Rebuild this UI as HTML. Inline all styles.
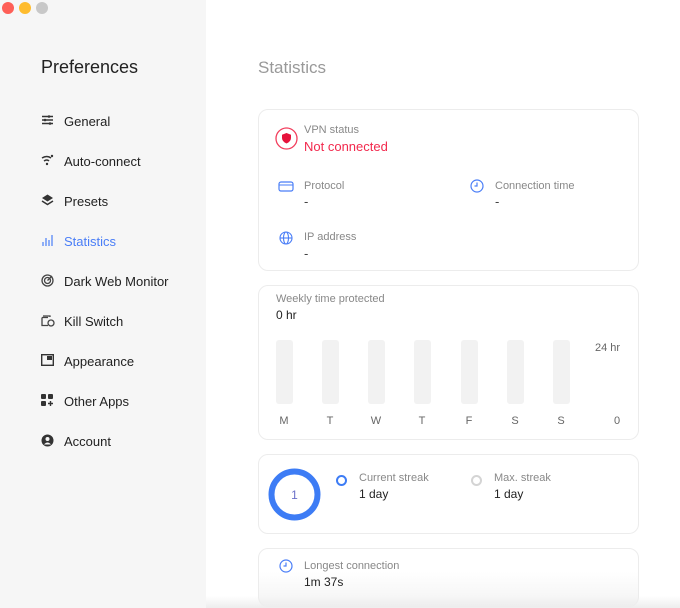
<!DOCTYPE html>
<html style="width:680px;height:608px;overflow:hidden"><head><style>
*{margin:0;padding:0;box-sizing:border-box}
body{width:680px;height:608px;overflow:hidden;font-family:"Liberation Sans",sans-serif;background:#fff;position:relative;color:#222}
.side{position:absolute;left:0;top:0;width:206px;height:608px;background:#f6f6f6}
.tl{position:absolute;top:2px;width:12px;height:12px;border-radius:50%}
.t{position:absolute;font-size:13px;white-space:nowrap}
.nav{position:absolute;left:64px;font-size:13px;color:#222}
.ic{position:absolute;left:41px}
.card{position:absolute;left:258px;width:381px;border:1px solid #ececec;border-radius:10px;background:#fff}
.g{color:#888;font-size:11px}
.bar{position:absolute;top:340px;width:17px;height:64px;background:#f2f2f2;border-radius:3px}
.lab{position:absolute;top:415px;font-size:11px;color:#666;width:20px;text-align:center}
</style></head><body>
<div class="side"></div>
<div class="tl" style="left:2px;background:#fe5f57"></div>
<div class="tl" style="left:19px;background:#febc2e"></div>
<div class="tl" style="left:36px;background:#c8c8c8"></div>
<div class="t" style="left:41px;top:57px;font-size:18px;color:#222">Preferences</div>

<svg class="ic" style="top:114px" width="13" height="12" viewBox="0 0 13 12"><g stroke="#333" stroke-width="1.4"><path d="M1 2.5h11M1 6h11M1 9.5h11"/></g><circle cx="8" cy="2.5" r="1.3" fill="#333"/><circle cx="4" cy="6" r="1.3" fill="#333"/><circle cx="9" cy="9.5" r="1.3" fill="#333"/></svg>
<div class="nav" style="top:114px">General</div>
<svg class="ic" style="top:154px" width="13" height="12" viewBox="0 0 13 12"><g stroke="#333" stroke-width="1.5" fill="none"><path d="M1 4q5-3 9 0M3 7q3-2 5 0"/></g><circle cx="6" cy="10" r="1.2" fill="#333"/><circle cx="11" cy="2" r="1.2" fill="#333"/></svg>
<div class="nav" style="top:154px">Auto-connect</div>
<svg class="ic" style="top:194px" width="13" height="12" viewBox="0 0 13 12"><path d="M6.5 0.5L12 4 6.5 7.5 1 4z" fill="#333"/><path d="M1 7l5.5 3.5L12 7" stroke="#333" stroke-width="1.5" fill="none"/></svg>
<div class="nav" style="top:194px">Presets</div>
<svg class="ic" style="top:234px" width="13" height="12" viewBox="0 0 13 12"><g stroke="#4a7ef7" stroke-width="1.2"><path d="M2 12V8M5 12V4M8 12V6M11 12V1"/></g></svg>
<div class="nav" style="top:234px;color:#4a7ef7">Statistics</div>
<svg class="ic" style="top:274px" width="13" height="13" viewBox="0 0 13 13"><g stroke="#444" stroke-width="1.3" fill="none"><circle cx="6.5" cy="6.5" r="5.5"/><circle cx="6.5" cy="6.5" r="3"/><path d="M6.5 6.5L11 2"/></g></svg>
<div class="nav" style="top:274px">Dark Web Monitor</div>
<svg class="ic" style="top:314px" width="14" height="13" viewBox="0 0 14 13"><g stroke="#444" stroke-width="1.3" fill="none"><path d="M2 2h7v1M1 3.5h6M1 3.5v8h6"/><circle cx="10" cy="9" r="3"/></g></svg>
<div class="nav" style="top:314px">Kill Switch</div>
<svg class="ic" style="top:354px" width="13" height="12" viewBox="0 0 13 12"><rect x="0.7" y="0.7" width="11.6" height="10.6" fill="none" stroke="#333" stroke-width="1.4"/><rect x="6" y="2" width="5" height="4" fill="#333"/></svg>
<div class="nav" style="top:354px">Appearance</div>
<svg class="ic" style="top:394px" width="13" height="13" viewBox="0 0 13 13"><g fill="#333"><rect x="0" y="0" width="5" height="5" rx="1"/><rect x="7" y="0" width="5" height="5" rx="1"/><rect x="0" y="7" width="5" height="5" rx="1"/></g><path d="M9.5 7v5M7 9.5h5" stroke="#333" stroke-width="1.4"/></svg>
<div class="nav" style="top:394px">Other Apps</div>
<svg class="ic" style="top:434px" width="13" height="13" viewBox="0 0 13 13"><circle cx="6.5" cy="6.5" r="6" fill="#333"/><circle cx="6.5" cy="5" r="2" fill="#f6f6f6"/><path d="M3 10.5q3.5-4 7 0" fill="#f6f6f6"/></svg>
<div class="nav" style="top:434px">Account</div>

<div class="t" style="left:258px;top:58px;font-size:17px;color:#999">Statistics</div>

<div class="card" style="top:109px;height:162px"></div>
<svg style="position:absolute;left:275px;top:127px" width="23" height="23" viewBox="0 0 23 23"><circle cx="11.5" cy="11.5" r="10.5" fill="none" stroke="#f23e5d" stroke-width="1.3"/><path d="M11.5 6l4.5 1.8v3.2q0 3.5-4.5 5.5-4.5-2-4.5-5.5V7.8z" fill="#e6133c"/></svg>
<div class="t g" style="left:304px;top:124px">VPN status</div>
<div class="t" style="left:304px;top:139px;color:#f2294d;font-size:13px">Not connected</div>
<svg style="position:absolute;left:278px;top:181px" width="16" height="11"><rect x="1" y="1" width="14" height="9" rx="2" fill="none" stroke="#4a7ef7" stroke-width="1.2"/><path d="M1 4h14" stroke="#4a7ef7"/></svg>
<div class="t g" style="left:304px;top:180px">Protocol</div>
<div class="t" style="left:304px;top:194px;color:#444">-</div>
<svg style="position:absolute;left:470px;top:179px" width="14" height="14"><circle cx="7" cy="7" r="6" fill="none" stroke="#4a7ef7" stroke-width="1.2"/><path d="M7 3.5V7H4.5" fill="none" stroke="#4a7ef7" stroke-width="1.2"/></svg>
<div class="t g" style="left:495px;top:180px">Connection time</div>
<div class="t" style="left:495px;top:194px;color:#444">-</div>
<svg style="position:absolute;left:279px;top:231px" width="14" height="14"><g fill="none" stroke="#4a7ef7" stroke-width="1.1"><circle cx="7" cy="7" r="6"/><ellipse cx="7" cy="7" rx="2.5" ry="6"/><path d="M1 7h12"/></g></svg>
<div class="t g" style="left:304px;top:231px">IP address</div>
<div class="t" style="left:304px;top:246px;color:#444">-</div>

<div class="card" style="top:285px;height:155px"></div>
<div class="t g" style="left:276px;top:293px">Weekly time protected</div>
<div class="t" style="left:276px;top:308px;font-size:12px">0 hr</div>
<div class="t g" style="left:595px;top:342px;color:#666">24 hr</div>
<div class="bar" style="left:276px"></div><div class="bar" style="left:322px"></div><div class="bar" style="left:368px"></div><div class="bar" style="left:414px"></div><div class="bar" style="left:461px"></div><div class="bar" style="left:507px"></div><div class="bar" style="left:553px"></div>
<div class="lab" style="left:274px">M</div><div class="lab" style="left:320px">T</div><div class="lab" style="left:366px">W</div><div class="lab" style="left:412px">T</div><div class="lab" style="left:459px">F</div><div class="lab" style="left:505px">S</div><div class="lab" style="left:551px">S</div><div class="lab" style="left:607px">0</div>

<div class="card" style="top:454px;height:80px"></div>
<svg style="position:absolute;left:268px;top:468px" width="53" height="53"><circle cx="26.5" cy="26.5" r="23" fill="none" stroke="#3d7cf5" stroke-width="6"/><text x="26.5" y="31" text-anchor="middle" font-size="12" fill="#6a70c8" font-family="Liberation Sans">1</text></svg>
<div style="position:absolute;left:336px;top:475px;width:11px;height:11px;border-radius:50%;border:2.5px solid #3d7cf5"></div>
<div class="t g" style="left:359px;top:472px">Current streak</div>
<div class="t" style="left:359px;top:487px;font-size:12px">1 day</div>
<div style="position:absolute;left:471px;top:475px;width:11px;height:11px;border-radius:50%;border:2.5px solid #d4d4d4"></div>
<div class="t g" style="left:494px;top:472px">Max. streak</div>
<div class="t" style="left:494px;top:487px;font-size:12px">1 day</div>

<div class="card" style="top:548px;height:59px;background:linear-gradient(#fff 40%,#f3f3f3)"></div>
<svg style="position:absolute;left:279px;top:559px" width="14" height="14"><circle cx="7" cy="7" r="6" fill="none" stroke="#4a7ef7" stroke-width="1.2"/><path d="M7 3.5V7H4.5" fill="none" stroke="#4a7ef7" stroke-width="1.2"/></svg>
<div class="t g" style="left:304px;top:560px">Longest connection</div>
<div class="t" style="left:304px;top:575px;font-size:12px">1m 37s</div>
<div style="position:absolute;left:206px;top:596px;width:474px;height:12px;background:linear-gradient(rgba(240,240,240,0),#ededed)"></div>
</body></html>
